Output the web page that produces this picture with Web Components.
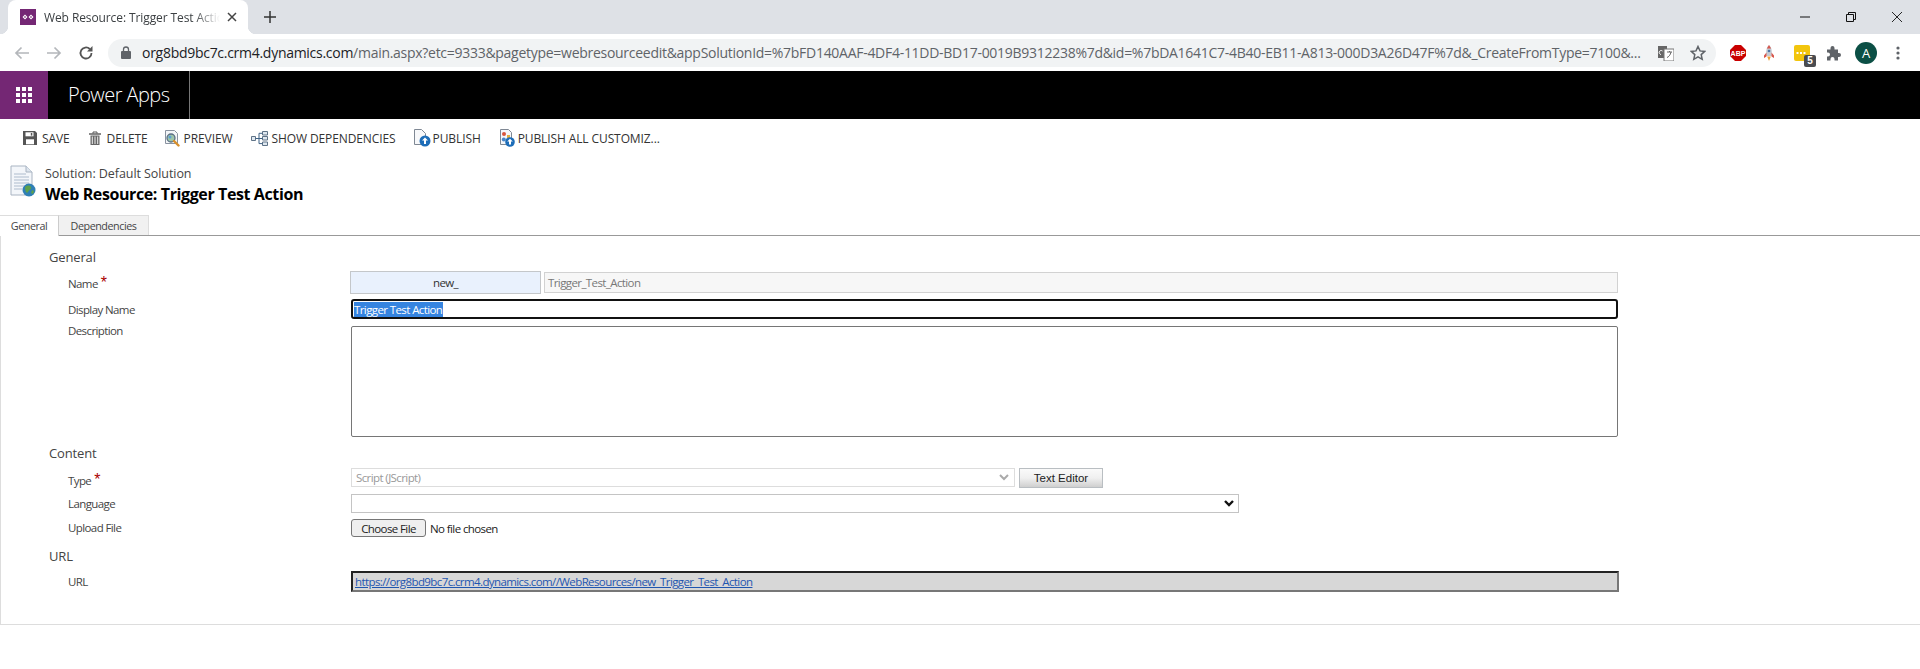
<!DOCTYPE html>
<html lang="en">
<head>
<meta charset="UTF-8">
<title>Web Resource: Trigger Test Action</title>
<style>
	html, body { margin: 0; background: #fff; overflow: hidden; }
	body { width: 1920px; height: 669px; font-family: "Open Sans", "Liberation Sans", sans-serif; }
	.ctl { font: 11.5px "Open Sans", "Liberation Sans", sans-serif; letter-spacing: -.6px; box-sizing: border-box; }
	.stretch { display: flex; gap: 3px; width: 1268px; height: 100%; margin-left: -1px; }
	.prefix { width: 189px; background: #e9f1fd; border: 1px solid #c4c7ca; display: flex; align-items: center; justify-content: center; color: #333; }
	.name { flex: 1; background: #f7f7f7; border: 1px solid #d2d2d2; margin: 1px 0; padding-left: 3px; display: flex; align-items: center; color: #777; }
	.focused { width: 1267px; height: 100%; border: 2px solid #111; border-radius: 3px; padding-left: 1px; display: flex; align-items: center; }
	.focused span { background: #3584e0; color: #fff; line-height: 15px; padding-right: 1px; }
	.area { width: 1267px; height: 100%; border: 1px solid #767676; border-radius: 2px; background: #fff; }
	.select { width: 664px; height: 19px; border: 1px solid #ddd; display: flex; align-items: center; justify-content: space-between; padding: 0 5px 0 4px; color: #999; }
	.type-wrap { display: flex; gap: 4px; height: 100%; }
	.txt-btn { width: 84px; height: 20px; background: linear-gradient(#fafafa, #f0f0f0 50%, #cfcfcf); border: 1px solid #b9bec2; display: flex; align-items: center; justify-content: center; font: 11.5px "Liberation Sans", sans-serif; letter-spacing: 0; color: #222; }
	.lang { width: 888px; height: 100%; border: 1px solid #c4c4c4; display: flex; align-items: center; justify-content: flex-end; padding-right: 4px; }
	.file { display: flex; align-items: center; height: 100%; color: #222; }
	.file b { font-weight: 400; width: 75px; height: 100%; box-sizing: border-box; background: #efefef; border: 1px solid #767676; border-radius: 3px; display: flex; align-items: center; justify-content: center; margin-right: 4px; }
	.urlbox { width: 1268px; height: 100%; background: #d7d7d7; border-style: solid; border-width: 2px; border-color: #222 #777 #777 #222; display: flex; align-items: center; padding-left: 2px; }
	.urlbox a { color: #1f56b0; text-decoration: underline; }
</style>
</head>
<body>
	<chrome-tabs title-text="Web Resource: Trigger Test Action"></chrome-tabs>
	<chrome-toolbar url-host="org8bd9bc7c.crm4.dynamics.com" url-rest="/main.aspx?etc=9333&amp;pagetype=webresourceedit&amp;appSolutionId=%7bFD140AAF-4DF4-11DD-BD17-0019B9312238%7d&amp;id=%7bDA1641C7-4B40-EB11-A813-000D3A26D47F%7d&amp;_CreateFromType=7100&amp;..."></chrome-toolbar>
	<app-header name="Power Apps"></app-header>
	<cmd-bar>
		<cmd-button label="SAVE" gap="5" start="23"><svg viewBox="0 0 14 14" width="14" height="14"><path d="M0 0h12l2 2v12H0z" fill="#555"/><path d="M2.500 1.300h8v4h-8z" fill="#fff"/><path d="M7.800 2h1.500v2.600H7.800z" fill="#555"/><path d="M3 8.300h8v5H3z" fill="#fff"/></svg></cmd-button>
		<cmd-button label="DELETE" gap="5" start="18"><svg viewBox="0 0 14 15" width="14" height="15"><path d="M1 3h12" stroke="#555" stroke-width="1.400"/><path d="M5 2.500V1h4v1.500" fill="none" stroke="#555"/><path d="M2.500 4.500h9V14h-9z" fill="#666"/><path d="M4.300 5.500v7.500M7 5.500v7.500M9.700 5.500v7.500" stroke="#fff" stroke-width=".9"/></svg></cmd-button>
		<cmd-button label="PREVIEW" gap="3" start="16"><svg viewBox="0 0 17 17" width="17" height="17"><path d="M1.500.5h9l3 3v10h-12z" fill="#f4f6f8" stroke="#8a93a0"/><circle cx="7" cy="8" r="4" fill="#9fc6a8" stroke="#5c6f86" stroke-width="1.300"/><circle cx="6" cy="7" r="1.500" fill="#5aa0d8"/><path d="M10 11l4.500 4.500" stroke="#d8902c" stroke-width="2.400" stroke-linecap="round"/></svg></cmd-button>
		<cmd-button label="SHOW DEPENDENCIES" gap="3" start="19"><svg viewBox="0 0 17 15" width="17" height="15" fill="#dfe8f0" stroke="#5f7387"><path d="M.5 5.500h4v4h-4zM11.500.5h5v3.500h-5zM11.500 5.500h5v3.500h-5zM11.500 11h5v3.500h-5z"/><path d="M4.500 7.500h7M8 2.300v10.300M8 2.300h3.500M8 12.600h3.500" fill="none" stroke="#3f6285"/></svg></cmd-button>
		<cmd-button label="PUBLISH" gap="2" start="17"><svg viewBox="0 0 18 18" width="18" height="18"><path d="M1.500.5h7l4 4v11h-11z" fill="#f7f8fa" stroke="#7f8894"/><circle cx="12" cy="12" r="5.500" fill="#1d6db8"/><path d="M12 8.500l3 3h-2v3.500h-2v-3.500H9z" fill="#fff"/></svg></cmd-button>
		<cmd-button label="PUBLISH ALL CUSTOMIZ..." gap="3" start="19"><svg viewBox="0 0 15 18" width="15" height="18"><path d="M.5.5h8l3 3v12h-11z" fill="#f5f7fa" stroke="#7f8894"/><circle cx="4" cy="5" r="2" fill="#d8553c"/><circle cx="3.800" cy="10.500" r="2" fill="#4a86c8"/><path d="M7 6h3v3H7z" fill="#e0b040"/><circle cx="10" cy="13" r="4.800" fill="#1d6db8"/><path d="M10 9.800l2.800 2.800H11v3H9v-3H7.200z" fill="#fff"/></svg></cmd-button>
	</cmd-bar>
	<page-title solution="Solution: Default Solution" name="Web Resource: Trigger Test Action"></page-title>
	<form-tabs></form-tabs>
	<form-panel>
		<form-section heading="General" style="margin-top:12px"></form-section>
		<form-row label="Name" required h="23" mt="5" shift="3"><div class="ctl stretch"><div class="prefix">new_</div><div class="name">Trigger_Test_Action</div></div></form-row>
		<form-row label="Display Name" h="20" mt="5" shift="2"><div class="ctl focused"><span>Trigger Test Action</span></div></form-row>
		<form-row label="Description" h="111" mt="7" top><div class="ctl area"></div></form-row>
		<form-section heading="Content" style="margin-top:7px"></form-section>
		<form-row label="Type" required h="20" mt="6" shift="5"><div class="type-wrap"><div class="ctl select"><span>Script (JScript)</span><svg width="10" height="7" viewBox="0 0 10 7"><path d="M1 1l4 4 4-4" fill="none" stroke="#aaa" stroke-width="2"/></svg></div><div class="ctl txt-btn">Text Editor</div></div></form-row>
		<form-row label="Language" h="19" mt="6" shift="1"><div class="ctl lang"><svg width="10" height="7" viewBox="0 0 10 7"><path d="M1 1l4 4 4-4" fill="none" stroke="#111" stroke-width="2.400"/></svg></div></form-row>
		<form-row label="Upload File" h="18" mt="6"><div class="ctl file"><b>Choose File</b>No file chosen</div></form-row>
		<form-section heading="URL" style="margin-top:10px"></form-section>
		<form-row label="URL" h="21" mt="6"><div class="ctl urlbox"><a>https://org8bd9bc7c.crm4.dynamics.com//WebResources/new_Trigger_Test_Action</a></div></form-row>
	</form-panel>

	<script>
		// small helper, each element just sets its shadow html once
		class Base extends HTMLElement {
			connectedCallback() {
				if (this.shadowRoot) return;
				this.attachShadow({ mode: 'open' }).innerHTML = this.render();
			}
			attr(name) {
				return (this.getAttribute(name) || '').replace(/&/g, '&amp;');
			}
		}

		class ChromeTabs extends Base {
			render() {
				return `<style>
					:host { display: flex; height: 34px; background: #dee1e6; color: #3c4043; font: 12px "Open Sans", sans-serif; }
					.tab { position: relative; width: 240px; margin-left: 8px; background: #fff; border-radius: 8px 8px 0 0; display: flex; align-items: center; box-sizing: border-box; padding-left: 12px; }
					.tab::before, .tab::after { content: ""; position: absolute; bottom: 0; width: 8px; height: 8px; }
					.tab::before { left: -8px; background: radial-gradient(circle at 0 0, transparent 8px, #fff 8.5px); }
					.tab::after { right: -8px; background: radial-gradient(circle at 100% 0, transparent 8px, #fff 8.5px); }
					.fav { flex: none; }
					.title { width: 176px; margin-left: 8px; white-space: nowrap; overflow: hidden; letter-spacing: -.1px; -webkit-mask-image: linear-gradient(90deg, #000 150px, transparent 176px); }
					.close { margin-left: 7px; flex: none; }
					.plus { margin-left: 16px; align-self: center; flex: none; }
					.win { margin-left: auto; display: flex; align-items: center; }
					.win span { width: 46px; display: flex; justify-content: center; }
				</style>
				<div class="tab">
					<svg class="fav" width="16" height="16" viewBox="0 0 16 16"><path d="M0 0h16v16H0z" fill="#742774"/><path d="M5 5.500L7.500 8 5 10.500 2.500 8zM11 5.500L13.500 8 11 10.500 8.500 8z" fill="#fff"/><path d="M5 7l1 1-1 1-1-1zM11 7l1 1-1 1-1-1z" fill="#742774"/></svg>
					<div class="title">${this.attr('title-text')}</div>
					<svg class="close" width="10" height="10" viewBox="0 0 10 10"><path d="M1 1l8 8M9 1l-8 8" stroke="#444" stroke-width="1.500"/></svg>
				</div>
				<svg class="plus" width="12" height="12" viewBox="0 0 12 12"><path d="M6 0v12M0 6h12" stroke="#333" stroke-width="1.500"/></svg>
				<div class="win">
					<span><svg width="10" height="10" viewBox="0 0 10 10"><path d="M0 5h10" stroke="#111"/></svg></span>
					<span><svg width="10" height="10" viewBox="0 0 10 10"><path d="M.5 2.500h7v7h-7zM2.500 2.500V.5h7v7h-2" fill="none" stroke="#111"/></svg></span>
					<span><svg width="10" height="10" viewBox="0 0 10 10"><path d="M0 0l10 10M10 0L0 10" stroke="#111" stroke-width=".9"/></svg></span>
				</div>`;
			}
		}

		class ChromeToolbar extends Base {
			render() {
				return `<style>
					:host { display: flex; align-items: center; height: 37px; background: #fff; padding-left: 6px; box-sizing: border-box; }
					.nav { width: 32px; display: flex; justify-content: center; }
					.pill { width: 1608px; height: 28px; margin-left: 6px; border-radius: 14px; background: #f1f3f4; display: flex; align-items: center; box-sizing: border-box; padding-left: 13px; }
					.url { margin-left: 11px; width: 1501px; white-space: nowrap; overflow: hidden; font: 14px "Open Sans", sans-serif; letter-spacing: -.28px; color: #5f6368; }
					.url b { font-weight: 400; color: #202124; }
					.pill svg.t { margin-left: 15px; }
					.pill svg.s { margin-left: 16px; }
					.ext { display: flex; align-items: center; margin-left: 14px; }
					.avatar { width: 22px; height: 22px; border-radius: 50%; background: #0b4f45; color: #fff; font: 13px "Open Sans", sans-serif; display: flex; align-items: center; justify-content: center; }
					.badge { position: absolute; left: 10px; top: 10px; width: 12px; height: 12px; background: #4a4c50; color: #fff; font: 700 10px/12px "Liberation Sans", sans-serif; text-align: center; border-radius: 2px; }
					.yellow { position: relative; width: 16px; height: 16px; background: #f2c50d; border-radius: 2px; display: flex; justify-content: center; }
				</style>
				<span class="nav"><svg width="16" height="14" viewBox="0 0 16 14"><path d="M15 7H2M7.500 1.500L2 7l5.500 5.500" fill="none" stroke="#b4b7bb" stroke-width="1.700"/></svg></span>
				<span class="nav"><svg width="16" height="14" viewBox="0 0 16 14"><path d="M1 7h13M8.500 1.500L14 7l-5.500 5.500" fill="none" stroke="#b4b7bb" stroke-width="1.700"/></svg></span>
				<span class="nav"><svg width="16" height="16" viewBox="0 0 16 16"><path d="M13.500 8A5.500 5.500 0 1 1 11.800 4" fill="none" stroke="#555" stroke-width="1.800"/><path d="M14.500 1v5.500H9z" fill="#555"/></svg></span>
				<div class="pill">
					<svg width="10" height="13" viewBox="0 0 10 13"><path d="M2.500 5V3.500a2.500 2.500 0 0 1 5 0V5" fill="none" stroke="#5f6368" stroke-width="1.300"/><rect y="5" width="10" height="8" rx="1" fill="#5f6368"/></svg>
					<div class="url"><b>${this.attr('url-host')}</b>${this.attr('url-rest')}</div>
					<svg class="t" width="16" height="16" viewBox="0 0 16 16"><path d="M0 1h9v12H0z" fill="#666"/><path d="M6 4h10v12H6z" fill="#fff" stroke="#777"/><path d="M3 9.500a2 2 0 1 1 1.500-3.500" fill="none" stroke="#fff"/><path d="M9 7h5M11.500 6v1M13 7c-.5 3-2.500 5-4 5.500" fill="none" stroke="#666"/></svg>
					<svg class="s" width="16" height="16" viewBox="0 0 16 16"><path d="M8 1.500l2 4.400 4.800.5-3.600 3.200 1 4.700L8 11.900l-4.200 2.400 1-4.700L1.200 6.400 6 5.900z" fill="none" stroke="#5f6368" stroke-width="1.500"/></svg>
				</div>
				<div class="ext">
					<svg width="16" height="16" viewBox="0 0 16 16"><path d="M5 0h6l5 5v6l-5 5H5l-5-5V5z" fill="#c90000"/><text x="8" y="10.500" text-anchor="middle" font-family="Liberation Sans" font-weight="700" font-size="7" fill="#fff">ABP</text></svg>
					<svg style="margin-left:17px" width="12" height="16" viewBox="0 0 12 16"><path d="M6 0c2 2 2.800 4 2.800 7v4H3.200V7C3.200 4 4 2 6 0z" fill="#c3cad3"/><path d="M3.800 3.500h4.400L6 0z" fill="#d8574c"/><path d="M3.500 7.500L1 10.500V13l2.500-1.500zM8.500 7.500l2.500 3V13l-2.500-1.500z" fill="#d8574c"/><circle cx="6" cy="6" r="1.300" fill="#4f77a6"/><path d="M4.200 11.500h3.600L6 16z" fill="#eda03a"/></svg>
					<div class="yellow" style="margin-left:19px"><svg width="14" height="16" viewBox="0 0 14 16"><path d="M1.500 7h2v2h-2zM5 7h2v2H5zM8.500 7h2v2h-2z" fill="#fff"/></svg><span class="badge">5</span></div>
					<svg style="margin-left:16px" width="16" height="16" viewBox="0 0 16 16"><path d="M1 4.500h3.500V3a2 2 0 0 1 4 0v1.500H12v3.500h1a2 2 0 0 1 0 4h-1v3.500H8.500V14a2 2 0 0 0-4 0v1.500H1v-4h1a2 2 0 0 0 0-4H1z" fill="#5f6368"/></svg>
					<div class="avatar" style="margin-left:13px">A</div>
					<svg style="margin-left:19px" width="4" height="14" viewBox="0 0 4 14"><circle cx="2" cy="2" r="1.600" fill="#5f6368"/><circle cx="2" cy="7" r="1.600" fill="#5f6368"/><circle cx="2" cy="12" r="1.600" fill="#5f6368"/></svg>
				</div>`;
			}
		}

		class AppHeader extends Base {
			render() {
				return `<style>
					:host { display: flex; height: 48px; background: #000; color: #fff; align-items: stretch; }
					.grid { width: 48px; background: #742774; display: flex; align-items: center; justify-content: center; }
					.name { width: 142px; box-sizing: border-box; padding-left: 20px; border-right: 1px solid #777; display: flex; align-items: center; font: 300 20px "Open Sans", sans-serif; letter-spacing: -.55px; padding-bottom: 1px; }
				</style>
				<div class="grid"><svg width="16" height="16" viewBox="0 0 16 16" fill="#fff"><path d="M0 0h4v4H0zM6 0h4v4H6zM12 0h4v4h-4zM0 6h4v4H0zM6 6h4v4H6zM12 6h4v4h-4zM0 12h4v4H0zM6 12h4v4H6zM12 12h4v4h-4z"/></svg></div>
				<div class="name">${this.attr('name')}</div>`;
			}
		}

		class CmdBar extends Base {
			render() {
				return `<style>
					:host { display: flex; height: 38px; align-items: center; background: #fff; }
				</style><slot></slot>`;
			}
		}

		class CmdButton extends Base {
			render() {
				const gap = this.getAttribute('gap');
				const start = this.getAttribute('start');
				return `<style>
					:host { display: flex; align-items: center; color: #333; font: 12px "Open Sans", sans-serif; letter-spacing: -.1px; white-space: nowrap; }
					.w { display: flex; align-items: center; gap: ${gap}px; margin-left: ${start}px; }
					::slotted(svg) { flex: none; }
				</style><div class="w"><slot></slot><span>${this.attr('label')}</span></div>`;
			}
		}

		class PageTitle extends Base {
			render() {
				return `<style>
					:host { display: flex; height: 58px; box-sizing: border-box; padding: 8px 0 0 10px; font-family: "Open Sans", sans-serif; }
					.txt { margin-left: 9px; margin-top: -1px; }
					.sol { font-size: 12.500px; line-height: 20px; color: #444; letter-spacing: -.07px; }
					.nm { font-size: 16px; font-weight: 700; line-height: 22px; margin-top: -1px; color: #000; letter-spacing: -.39px; }
				</style>
				<svg width="26" height="32" viewBox="0 0 26 32">
					<path d="M1 1h15l6 6v23H1z" fill="#f3f6fa" stroke="#a9b4c2"/>
					<path d="M16 1v6h6" fill="#dde5ee" stroke="#a9b4c2"/>
					<path d="M4 9h12M4 12h15M4 15h15M4 18h15M4 21h10M4 24h8" stroke="#aebccd"/>
					<circle cx="19" cy="25" r="6.500" fill="#2f7fb5"/>
					<path d="M15 22c2-2 5-2 6 0s-2 3-3 5-3 0-3-5zM22 25l2 1-1 3-2-1z" fill="#5da14c"/>
				</svg>
				<div class="txt"><div class="sol">${this.attr('solution')}</div><div class="nm">${this.attr('name')}</div></div>`;
			}
		}

		class FormTabs extends Base {
			render() {
				return `<style>
					:host { display: flex; height: 21px; box-sizing: border-box; border-bottom: 1px solid #999; font: 10.750px "Open Sans", sans-serif; letter-spacing: -.45px; color: #444; }
					div { height: 21px; box-sizing: border-box; display: flex; align-items: center; justify-content: center; border: 1px solid #ddd; border-bottom: 0; }
					.a { width: 59px; background: #fff; border-left: 0; border-right-color: #ccc; position: relative; }
					.b { width: 90px; background: #f1f1f1; border-left: 0; height: 20px; }
				</style>
				<div class="a">General</div><div class="b">Dependencies</div>`;
			}
		}

		class FormPanel extends Base {
			render() {
				return `<style>
					:host { display: flex; flex-direction: column; height: 389px; box-sizing: border-box; border-left: 1px solid #ddd; border-bottom: 1px solid #ddd; padding-left: 48px; }
				</style><slot></slot>`;
			}
		}

		class FormSection extends Base {
			render() {
				return `<style>
					:host { display: block; height: 18px; font: 500 13px/18px "Open Sans", sans-serif; letter-spacing: -.15px; color: #444; }
				</style>${this.attr('heading')}`;
			}
		}

		class FormRow extends Base {
			render() {
				const h = this.getAttribute('h');
				const mt = this.getAttribute('mt');
				const shift = this.getAttribute('shift') || 0;
				const star = this.hasAttribute('required') ? '<i>*</i>' : '';
				return `<style>
					:host { display: grid; grid-template-columns: 283px 1fr; height: ${h}px; margin-top: ${mt}px; padding-left: 19px; font: 11.500px "Open Sans", sans-serif; letter-spacing: -.6px; color: #444; }
					.l { align-self: center; padding-top: ${shift}px; line-height: 16px; }
					:host([top]) .l { align-self: start; margin-top: -3px; }
					i { font: 16px/10px "Liberation Sans", sans-serif; color: #a00; margin-left: 3px; }
				</style><div class="l">${this.attr('label')}${star}</div><div><slot></slot></div>`;
			}
		}

		customElements.define('chrome-tabs', ChromeTabs);
		customElements.define('chrome-toolbar', ChromeToolbar);
		customElements.define('app-header', AppHeader);
		customElements.define('cmd-bar', CmdBar);
		customElements.define('cmd-button', CmdButton);
		customElements.define('page-title', PageTitle);
		customElements.define('form-tabs', FormTabs);
		customElements.define('form-panel', FormPanel);
		customElements.define('form-section', FormSection);
		customElements.define('form-row', FormRow);
	</script>
</body>
</html>
